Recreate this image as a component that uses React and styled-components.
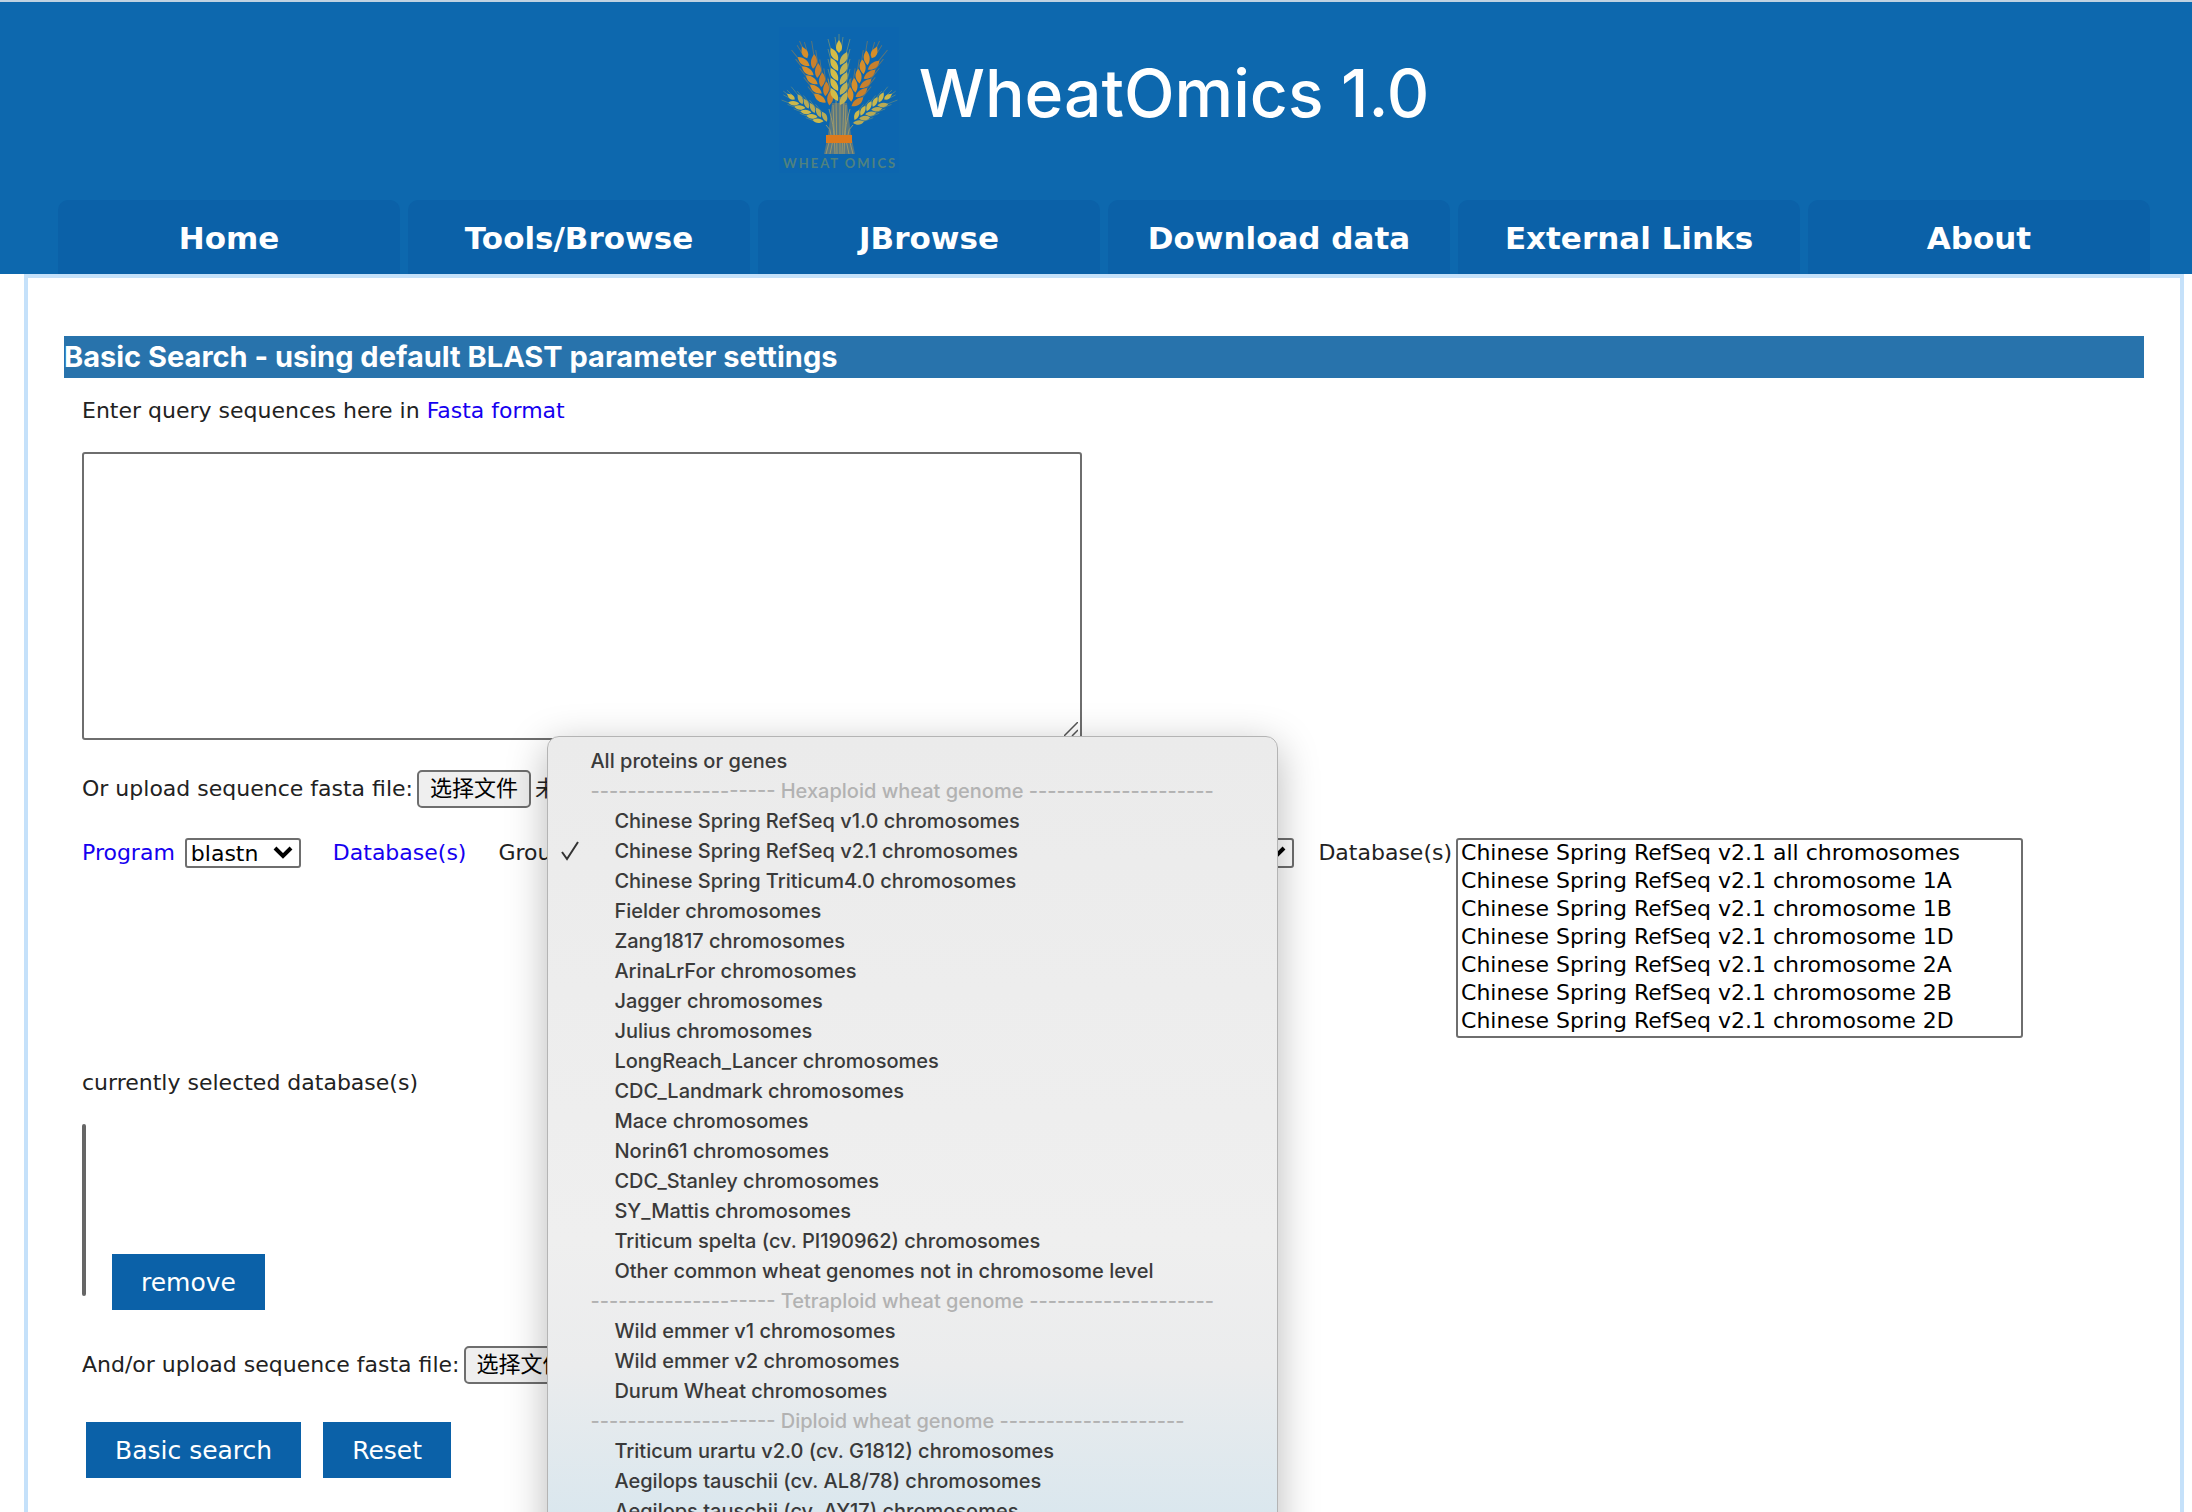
import { useRef, useState } from "react";
import styled, { createGlobalStyle } from "styled-components";

const GlobalStyle = createGlobalStyle`
  *, *::before, *::after {
    box-sizing: border-box;
  }
  body {
    margin: 0;
    background-color: #fff;
    color: #222;
    font-family: Verdana, "DejaVu Sans", "Noto Sans CJK SC", sans-serif;
    font-size: 22px;
    line-height: 30px;
  }
  button, input, select, textarea {
    margin: 0;
    font-family: inherit;
  }
`;

const Page = styled.div`
  height: 100vh;
  overflow: hidden;
`;

const Header = styled.header`
  background-color: #0d68ae;
  border-top: 2px solid #bfd2e2;
`;

const Brand = styled.div`
  display: flex;
  justify-content: center;
  gap: 20px;
  padding: 25px 0 27px 16px;
`;

const Title = styled.h1`
  margin: 0;
  color: #fff;
  font-family: Inter, sans-serif;
  font-size: 66px;
  font-weight: 500;
  line-height: 132px;
`;

const Nav = styled.nav`
  display: grid;
  grid-template-columns: repeat(6, 1fr);
  gap: 8px;
  padding: 0 42px 0 58px;
`;

const NavLink = styled.a`
  padding: 18px 0 16px;
  border-radius: 10px 10px 0 0;
  background-color: #0b61a8;
  color: #fff;
  font-size: 31px;
  font-weight: 700;
  line-height: 40px;
  text-align: center;
  text-decoration: none;
`;

const Panel = styled.main`
  min-height: 100vh;
  margin: 0 8px 0 24px;
  padding: 58px 36px 0;
  border: 4px solid #c5e1fa;
`;

const SectionTitle = styled.h2`
  margin: 0 0 18px;
  background-color: #2873ac;
  color: #fff;
  font-family: Inter, sans-serif;
  font-size: 29px;
  font-weight: 700;
  line-height: 42px;
`;

const Form = styled.form`
  padding-left: 18px;
`;

const HelpLink = styled.a`
  color: #1500f0;
  text-decoration: none;
`;

const QueryWrap = styled.div`
  position: relative;
  width: fit-content;
  margin: 26px 0 30px;

  svg {
    position: absolute;
    right: 4px;
    bottom: 4px;
    pointer-events: none;
  }
`;

const QueryBox = styled.textarea`
  display: block;
  width: 1000px;
  height: 288px;
  border: 2px solid #6e6e6e;
  border-radius: 3px;
  font-size: 22px;

  &::-webkit-resizer {
    display: none;
  }
`;

const UploadRow = styled.div`
  display: flex;
  align-items: center;
  gap: 4px;
`;

const FileButton = styled.button`
  height: 38px;
  padding: 0 11px;
  border: 2px solid #6e6e6e;
  border-radius: 5px;
  background-color: #efefef;
  color: #000;
  font-size: 22px;
  line-height: 30px;
`;

const HiddenFile = styled.input`
  display: none;
`;

const OptionsRow = styled.div`
  display: flex;
  align-items: flex-start;
  gap: 32px;
  margin: 30px 0;
`;

const DatabaseGroup = styled.div`
  display: flex;
  align-items: flex-start;
  gap: 24px;
`;

const Field = styled.div`
  display: flex;
  align-items: ${(props) => (props.$top ? "flex-start" : "center")};
  gap: ${(props) => (props.$top ? "4px" : "10px")};
  white-space: nowrap;
`;

const SelectWrap = styled.div`
  position: relative;
  width: ${(props) => props.$width};
  height: 30px;

  > svg {
    position: absolute;
    top: 8px;
    right: 8px;
    pointer-events: none;
  }
`;

const Select = styled.select`
  display: block;
  width: 100%;
  height: 30px;
  padding: 0 4px;
  appearance: none;
  border: 2px solid #6e6e6e;
  border-radius: 3px;
  background-color: #fff;
  color: #000;
  font-size: 22px;
`;

const DatabaseList = styled.select`
  width: 567px;
  height: 200px;
  padding: 0;
  overflow: hidden;
  border: 2px solid #6e6e6e;
  border-radius: 3px;
  color: #000;
  font-size: 22px;

  option {
    height: 28px;
    min-height: 28px;
    padding: 0 3px;
    line-height: 28px;
  }
`;

const Menu = styled.ul`
  position: absolute;
  top: -102px;
  left: -28px;
  z-index: 1;
  width: 731px;
  height: 840px;
  margin: 0;
  padding: 9px 0;
  list-style: none;
  border: 1px solid #b4b4b4;
  border-radius: 12px;
  background: linear-gradient(#ebebeb, #efefef 60%, #ebeced 75%, #dae7ee 93%);
  box-shadow: 0 10px 40px rgba(0, 0, 0, 0.28);
  color: #3a3a3a;
  font-family: Inter, sans-serif;
  font-size: 20px;
  font-weight: 500;
`;

const MenuItem = styled.li`
  display: flex;
  align-items: center;
  height: 30px;
  padding-left: ${(props) => (props.$nested ? "66px" : "42px")};
  color: ${(props) => (props.$heading ? "#b2b2b2" : "inherit")};
  cursor: default;
`;

const Check = styled.span`
  display: flex;
  width: 54px;
  margin-left: -54px;
`;

const SelectedRow = styled.div`
  display: flex;
  gap: 26px;
  height: 186px;
  margin: 26px 0 36px;
`;

const SelectedList = styled.select`
  width: 4px;
  height: 172px;
  padding: 0;
  overflow: hidden;
  border: 2px solid #666;
`;

const ActionButton = styled.button`
  align-self: flex-end;
  height: 56px;
  padding: 0 29px;
  border: none;
  background-color: #0b61a8;
  color: #fff;
  font-size: 25px;
  cursor: pointer;
`;

const Actions = styled.div`
  display: flex;
  gap: 22px;
  padding: 38px 0 0 4px;
`;

const menuRows = [
  { text: "All proteins or genes", type: "root" },
  {
    text: "-------------------- Hexaploid wheat genome --------------------",
    type: "heading",
  },
  { text: "Chinese Spring RefSeq v1.0 chromosomes" },
  { text: "Chinese Spring RefSeq v2.1 chromosomes" },
  { text: "Chinese Spring Triticum4.0 chromosomes" },
  { text: "Fielder chromosomes" },
  { text: "Zang1817 chromosomes" },
  { text: "ArinaLrFor chromosomes" },
  { text: "Jagger chromosomes" },
  { text: "Julius chromosomes" },
  { text: "LongReach_Lancer chromosomes" },
  { text: "CDC_Landmark chromosomes" },
  { text: "Mace chromosomes" },
  { text: "Norin61 chromosomes" },
  { text: "CDC_Stanley chromosomes" },
  { text: "SY_Mattis chromosomes" },
  { text: "Triticum spelta (cv. PI190962) chromosomes" },
  { text: "Other common wheat genomes not in chromosome level" },
  {
    text: "-------------------- Tetraploid wheat genome --------------------",
    type: "heading",
  },
  { text: "Wild emmer v1 chromosomes" },
  { text: "Wild emmer v2 chromosomes" },
  { text: "Durum Wheat chromosomes" },
  {
    text: "-------------------- Diploid wheat genome --------------------",
    type: "heading",
  },
  { text: "Triticum urartu v2.0 (cv. G1812) chromosomes" },
  { text: "Aegilops tauschii (cv. AL8/78) chromosomes" },
  { text: "Aegilops tauschii (cv. AY17) chromosomes" },
];

const databases = [
  "all chromosomes",
  "chromosome 1A",
  "chromosome 1B",
  "chromosome 1D",
  "chromosome 2A",
  "chromosome 2B",
  "chromosome 2D",
];

const navItems = [
  "Home",
  "Tools/Browse",
  "JBrowse",
  "Download data",
  "External Links",
  "About",
];

function Ear({ x, y, angle, color, shade, pairs, scale = 1 }) {
  const rows = Array.from({ length: pairs }, (_, i) => 9 + i * 10);
  return (
    <g transform={`translate(${x} ${y}) rotate(${angle}) scale(${scale})`}>
      <g stroke={color} strokeWidth="1" opacity="0.4">
        <path d="M0 4V-11M-2 6L-4 -8M2 6L4 -8" />
        {rows.map((row) => (
          <path key={row} d={`M-7 ${row}L-11 ${row - 15}M7 ${row}L11 ${row - 15}`} />
        ))}
      </g>
      <path d="M0 -5C4 1 4 4 0 8C-4 4 -4 1 0 -5Z" fill={color} />
      {rows.map((row) => (
        <g key={row}>
          <path
            d={`M-8 ${row - 6}C-2 ${row - 3} 0 ${row + 2} -1 ${row + 7}C-7 ${row + 5} -10 ${row} -8 ${row - 6}Z`}
            fill={color}
          />
          <path
            d={`M8 ${row - 2}C2 ${row + 1} 0 ${row + 6} 1 ${row + 11}C7 ${row + 9} 10 ${row + 4} 8 ${row - 2}Z`}
            fill={shade}
          />
        </g>
      ))}
    </g>
  );
}

function Logo() {
  return (
    <svg width="120" height="146" viewBox="0 0 120 146" fill="none">
      <rect width="120" height="146" fill="#0c66af" />
      <path d="M53 76H68L72 108L76 127H45L49 108Z" fill="#8d8464" opacity="0.6" />
      <g stroke="#b9a560" strokeWidth="1" opacity="0.7">
        <path d="M61 70V127M57 72L58 127M65 72L63 127M50 82Q55 100 55 108L51 127M71 82Q66 100 66 108L70 127M47 98Q52 102 52 108L47 127M74 98Q69 102 69 108L74 127M54 78L56 127M67 78L65 127" />
      </g>
      <g opacity="0.92">
        <Ear x={25} y={24} angle={-24} color="#e8921f" shade="#d88322" pairs={5} />
        <Ear x={96} y={24} angle={24} color="#e8921f" shade="#d88322" pairs={5} />
        <Ear x={11} y={69} angle={-54} color="#dcc044" shade="#c5b04f" pairs={5} scale={0.75} />
        <Ear x={110} y={69} angle={54} color="#dcc044" shade="#c5b04f" pairs={5} scale={0.75} />
        <Ear x={60} y={18} angle={0} color="#e6c53e" shade="#cfb84e" pairs={5} />
      </g>
      <rect x="47" y="108" width="26" height="8" fill="#dd7a1c" />
      <text
        x="4"
        y="141"
        fill="#4f827f"
        fontFamily="Lato, sans-serif"
        fontSize="13"
        fontWeight="700"
        letterSpacing="2"
      >
        WHEAT OMICS
      </text>
    </svg>
  );
}

function Chevron() {
  return (
    <svg width="20" height="14" viewBox="0 0 20 14" fill="none">
      <path d="M2 2L10 10L18 2" stroke="#000" strokeWidth="4" />
    </svg>
  );
}

function CheckMark() {
  return (
    <svg width="20" height="20" viewBox="0 0 20 20" fill="none">
      <path d="M2 11L7 18L18 1" stroke="#333" strokeWidth="2" />
    </svg>
  );
}

function Grip() {
  return (
    <svg width="14" height="14" viewBox="0 0 14 14" fill="none">
      <path d="M0 14L14 0M8 14L14 8" stroke="#555" strokeWidth="1.5" />
    </svg>
  );
}

function Upload({ id, label }) {
  const fileRef = useRef(null);
  return (
    <UploadRow>
      <label htmlFor={id}>{label}</label>
      <FileButton type="button" onClick={() => fileRef.current.click()}>
        选择文件
      </FileButton>
      <HiddenFile id={id} type="file" ref={fileRef} />
      <span>未选择任何文件</span>
    </UploadRow>
  );
}

function GroupMenu({ group, onPick }) {
  return (
    <Menu role="listbox" aria-label="Group">
      {menuRows.map(({ text, type }) => (
        <MenuItem
          key={text}
          role="option"
          aria-selected={text === group}
          $nested={!type}
          $heading={type === "heading"}
          onClick={() => type !== "heading" && onPick(text)}
        >
          {text === group && (
            <Check>
              <CheckMark />
            </Check>
          )}
          {text}
        </MenuItem>
      ))}
    </Menu>
  );
}

function App() {
  const [group, setGroup] = useState("Chinese Spring RefSeq v2.1 chromosomes");

  return (
    <Page>
      <GlobalStyle />
      <Header>
        <Brand>
          <Logo />
          <Title>WheatOmics 1.0</Title>
        </Brand>
        <Nav>
          {navItems.map((item) => (
            <NavLink href="#" key={item}>
              {item}
            </NavLink>
          ))}
        </Nav>
      </Header>
      <Panel>
        <SectionTitle>
          Basic Search - using default BLAST parameter settings
        </SectionTitle>
        <Form onSubmit={(e) => e.preventDefault()}>
          <label htmlFor="query">
            Enter query sequences here in{" "}
            <HelpLink href="#">Fasta format</HelpLink>
          </label>
          <QueryWrap>
            <QueryBox id="query" />
            <Grip />
          </QueryWrap>
          <Upload id="query-file" label="Or upload sequence fasta file:" />
          <OptionsRow>
            <Field>
              <label htmlFor="program">
                <HelpLink href="#">Program</HelpLink>
              </label>
              <SelectWrap $width="116px">
                <Select id="program">
                  <option>blastn</option>
                </Select>
                <Chevron />
              </SelectWrap>
            </Field>
            <HelpLink href="#">Database(s)</HelpLink>
            <DatabaseGroup>
              <Field>
                <label htmlFor="group">Group</label>
                <SelectWrap $width="719px">
                  <Select
                    id="group"
                    value={group}
                    onChange={(e) => setGroup(e.target.value)}
                  >
                    <option>{group}</option>
                  </Select>
                  <Chevron />
                  <GroupMenu group={group} onPick={setGroup} />
                </SelectWrap>
              </Field>
              <Field $top>
                <label htmlFor="databases">Database(s)</label>
                <DatabaseList id="databases" size={7} multiple>
                  {databases.map((name) => (
                    <option key={name}>Chinese Spring RefSeq v2.1 {name}</option>
                  ))}
                </DatabaseList>
              </Field>
            </DatabaseGroup>
          </OptionsRow>
          <label htmlFor="selected">currently selected database(s)</label>
          <SelectedRow>
            <SelectedList id="selected" size={6} multiple />
            <ActionButton type="button">remove</ActionButton>
          </SelectedRow>
          <Upload id="db-file" label="And/or upload sequence fasta file:" />
          <Actions>
            <ActionButton type="submit">Basic search</ActionButton>
            <ActionButton type="reset">Reset</ActionButton>
          </Actions>
        </Form>
      </Panel>
    </Page>
  );
}

export default App;
